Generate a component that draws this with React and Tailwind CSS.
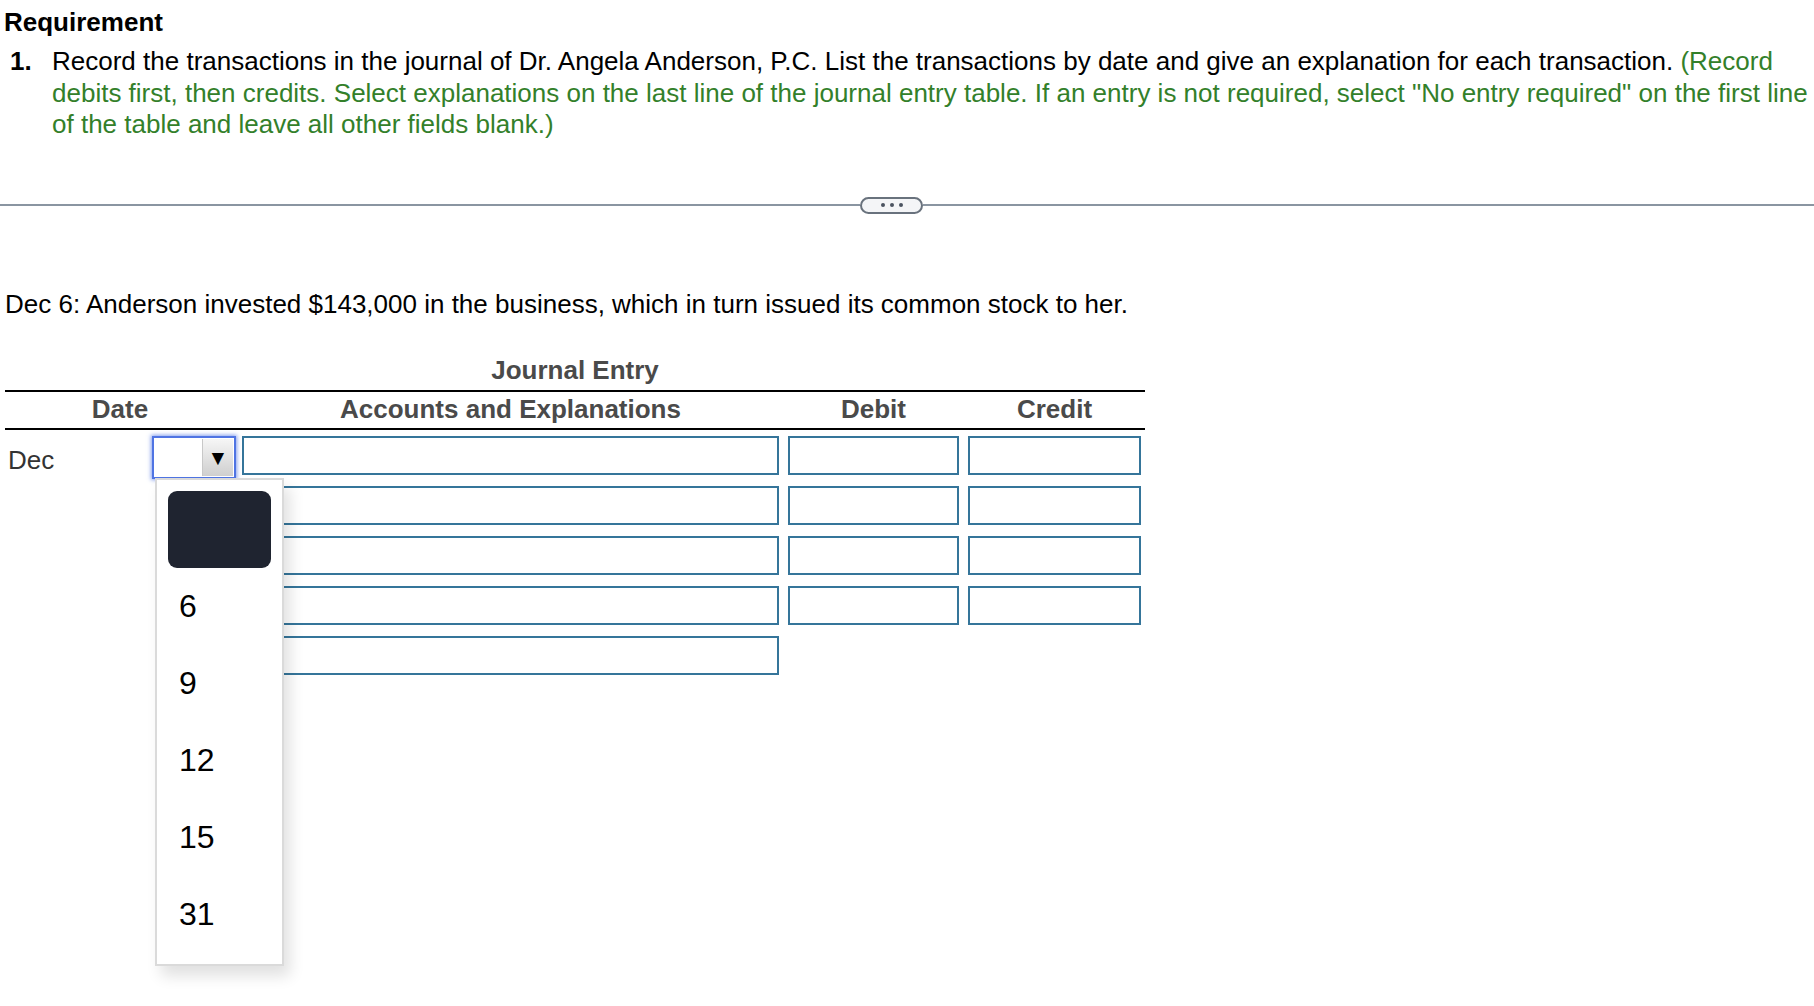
import React from 'react';

const rows = [0, 1, 2, 3, 4];
const days = ['', '6', '9', '12', '15', '31'];

function DateSelect() {
  return (
    <div className="relative w-[84px] h-[43px] self-start">
      <div className="flex h-full border-2 border-[#4f74e3] shadow-[0_0_4px_1px_rgba(79,116,227,0.7)] bg-white">
        <div className="flex-1" />
        <div className="w-[31px] my-[1px] mr-[1px] flex items-center justify-center bg-gradient-to-b from-[#f6f6f6] to-[#cfcfcf] border-l border-[#c8c8c8]">
          <span className="text-[21px] leading-none text-black">▼</span>
        </div>
      </div>

      {/* open list */}
      <div className="absolute left-[3px] top-[42px] z-10 w-[129px] bg-white border-2 border-[#dadada] shadow-[6px_10px_14px_rgba(0,0,0,0.12)] p-[11px]">
        {days.map((d, i) => (
          <div
            key={i}
            className={`h-[77px] flex items-center pl-[11px] text-[32px] text-black ${
              i === 0 ? 'bg-[#1f2430] rounded-[9px]' : ''
            }`}
          >
            {d}
          </div>
        ))}
      </div>
    </div>
  );
}

export default function App() {
  return (
    <div className="min-h-screen bg-white text-black font-['Liberation_Sans',Arial,sans-serif] text-[26px] leading-[31px]">
      <div className="pt-[7px] pl-[4px]">
        <div className="font-bold">Requirement</div>
        <div className="mt-[8px] flex">
          <div className="w-[48px] pl-[6px] font-bold">1.</div>
          <p className="flex-1 pr-[2px] leading-[31.5px]">
            Record the transactions in the journal of Dr. Angela Anderson, P.C. List the transactions by date and give an
            explanation for each transaction.{' '}
            <span className="text-[#33802a]">
              (Record debits first, then credits. Select explanations on the last line of the journal entry table. If an
              entry is not required, select "No entry required" on the first line of the table and leave all other fields
              blank.)
            </span>
          </p>
        </div>
      </div>

      {/* divider */}
      <div className="mt-[56px] flex items-center h-[17px]">
        <div className="w-[860px] h-[2px] bg-[#8a95a1]" />
        <div className="w-[63px] h-[17px] rounded-full border-2 border-[#69727d] bg-[#f4f5f7] flex items-center justify-center gap-[5px]">
          <span className="w-[4px] h-[4px] rounded-full bg-[#4b5360]" />
          <span className="w-[4px] h-[4px] rounded-full bg-[#4b5360]" />
          <span className="w-[4px] h-[4px] rounded-full bg-[#4b5360]" />
        </div>
        <div className="flex-1 h-[2px] bg-[#8a95a1]" />
      </div>

      <div className="pl-[5px]">
        <div className="mt-[75px]">Dec 6: Anderson invested $143,000 in the business, which in turn issued its common stock to her.</div>

        <div className="mt-[35px] w-[1140px]">
          <div className="text-center font-bold text-[#4a4a4a]">Journal Entry</div>
          <div className="mt-[4px] border-t-2 border-black" />
          <div className="flex h-[36px] items-center font-bold text-[#4a4a4a]">
            <div className="w-[230px] text-center">Date</div>
            <div className="ml-[7px] w-[537px] text-center">Accounts and Explanations</div>
            <div className="ml-[9px] w-[171px] text-center">Debit</div>
            <div className="ml-[9px] w-[173px] text-center">Credit</div>
          </div>
          <div className="border-t-2 border-black" />

          <div className="mt-[6px] flex flex-col gap-[11px]">
            {rows.map((r) => (
              <div key={r} className="flex items-center h-[39px]">
                <div className="w-[237px] flex items-start h-full">
                  {r === 0 && (
                    <>
                      <span className="w-[147px] pl-[3px] pt-[9px] text-[#333]">Dec</span>
                      <DateSelect />
                    </>
                  )}
                </div>
                <div className="w-[537px] h-full border-2 border-[#35759a]" />
                {r < 4 && (
                  <>
                    <div className="ml-[9px] w-[171px] h-full border-2 border-[#35759a]" />
                    <div className="ml-[9px] w-[173px] h-full border-2 border-[#35759a]" />
                  </>
                )}
              </div>
            ))}
          </div>
        </div>
      </div>
    </div>
  );
}
